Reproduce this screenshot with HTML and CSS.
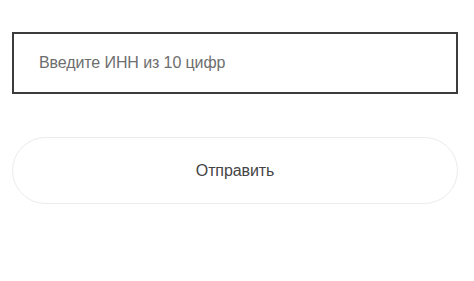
FILE: index.html
```html
<!DOCTYPE html>
<html lang="ru">
<head>
<meta charset="utf-8">
<link rel="stylesheet" href="styles.css">
</head>
<body>
<form class="form">
  <input class="inn-input" type="text" placeholder="Введите ИНН из 10 цифр">
  <button class="submit" type="button">Отправить</button>
</form>
</body>
</html>
```
FILE: styles.css
```css
html, body {
  margin: 0;
  padding: 0;
  background: #fff;
}
.form {
  display: flex;
  flex-direction: column;
  gap: 43px;
  padding: 32px 16px 0 12px;
  font-family: "Liberation Sans", Arial, sans-serif;
}
.inn-input {
  box-sizing: border-box;
  width: 446px;
  height: 62px;
  margin: 0;
  border: 2px solid #3c3c3c;
  border-radius: 0;
  padding: 0 0 0 25px;
  font-family: "Liberation Sans", Arial, sans-serif;
  font-size: 16px;
  letter-spacing: -0.1px;
  color: #333;
  outline: none;
  background: #fff;
}
.inn-input::placeholder {
  color: #6e6e6e;
  opacity: 1;
}
.submit {
  box-sizing: border-box;
  width: 446px;
  height: 67px;
  margin: 0;
  border: 1px solid #ebebeb;
  border-radius: 34px;
  background: #fff;
  font-family: "Liberation Sans", Arial, sans-serif;
  font-size: 16px;
  letter-spacing: -0.1px;
  color: #444;
  cursor: pointer;
}
```
